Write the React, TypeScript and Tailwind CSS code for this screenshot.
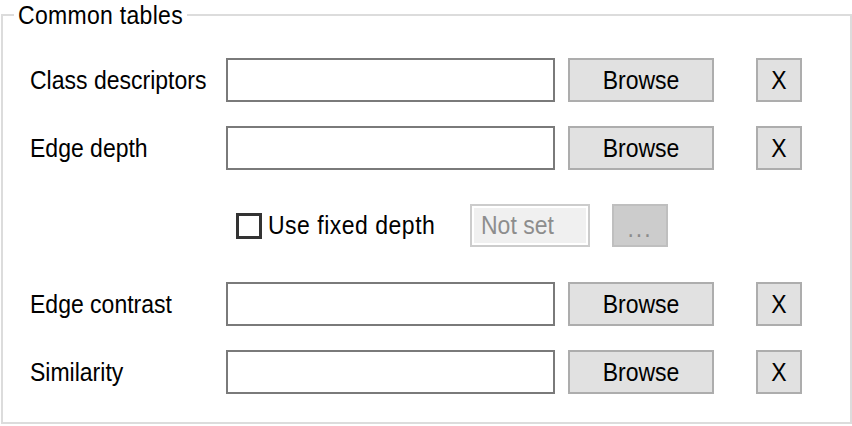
import React from "react";

const font = { fontFamily: '"Liberation Sans", Arial, sans-serif' };

function T({ children, className = "" }: { children: React.ReactNode; className?: string }) {
  return <span className={`inline-block scale-y-[1.15] ${className}`}>{children}</span>;
}

function FileRow({ label, className = "" }: { label: string; className?: string }) {
  return (
    <div className={`flex items-center h-[44px] ${className}`}>
      <div className="w-[196px] text-[23px] text-black leading-none">
        <T>{label}</T>
      </div>
      <div className="w-[329px] h-[44px] border-2 border-[#7a7a7a] bg-white" />
      <button className="ml-[13px] w-[146px] h-[44px] border-2 border-[#adadad] bg-[#e1e1e1] text-[23px] text-black leading-none flex items-center justify-center">
        <T>Browse</T>
      </button>
      <button className="ml-[42px] w-[46px] h-[44px] border-2 border-[#adadad] bg-[#e1e1e1] text-[23px] text-black leading-none flex items-center justify-center">
        <T>X</T>
      </button>
    </div>
  );
}

export default function App() {
  return (
    <div className="w-[852px] h-[426px] bg-white pl-[1px]" style={font}>
      <fieldset className="w-[851px] h-[424px] border-2 border-[#dcdcdc]">
        <legend className="ml-[11px] px-[4px] h-[30px] text-[23px] text-black leading-[30px] tracking-[0.3px]">
          <T>Common tables</T>
        </legend>
        <div className="flex flex-col pl-[27px] pt-[28px]">
          <FileRow label="Class descriptors" />
          <FileRow label="Edge depth" className="mt-[24px]" />
          <div className="flex items-center h-[43px] mt-[34px] pl-[206px]">
            <div className="w-[234px] flex items-center">
              <div className="w-[26px] h-[26px] border-[3px] border-[#333333] bg-white" />
              <div className="ml-[6px] text-[23px] text-black leading-none tracking-[0.5px]">
                <T>Use fixed depth</T>
              </div>
            </div>
            <div className="w-[120px] h-[43px] border-2 border-[#cccccc] shadow-[inset_0_0_0_2px_#ffffff] bg-[#f0f0f0] pl-[9px] flex items-center text-[23px] text-[#8d8d8d] leading-none">
              <T>Not set</T>
            </div>
            <div className="ml-[22px] w-[56px] h-[43px] border-2 border-[#bfbfbf] bg-[#cccccc] flex items-center justify-center text-[23px] text-[#8b8b8b] leading-none tracking-[2px]">
              <T className="translate-y-[3px]">...</T>
            </div>
          </div>
          <FileRow label="Edge contrast" className="mt-[35px]" />
          <FileRow label="Similarity" className="mt-[24px]" />
        </div>
      </fieldset>
    </div>
  );
}
